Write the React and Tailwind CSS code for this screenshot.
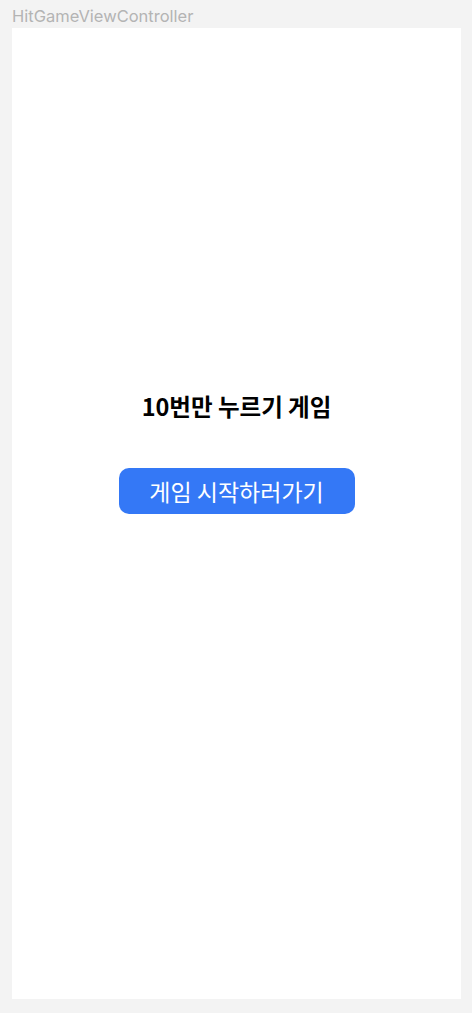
export default function App() {
  return (
    <div className="min-h-screen bg-white">
      <div className="w-[472px] h-[1013px] bg-[#f3f3f3] flex flex-col">
        <div
          className="h-[28px] pl-[12px] pt-[6px] text-[16.5px] leading-[20px] text-[#b4b4b4]"
          style={{ fontFamily: 'Inter, "Noto Sans", sans-serif' }}
        >
          HitGameViewController
        </div>
        <div
          className="mx-[12px] w-[449px] h-[971px] bg-white flex flex-col items-center pt-[364px]"
          style={{ fontFamily: '"Noto Sans CJK KR", sans-serif' }}
        >
          <h1 className="text-[23.5px] leading-[28px] font-bold text-black">10번만 누르기 게임</h1>
          <button className="mt-[48px] w-[236px] h-[46px] rounded-[10px] bg-[#3478f6] text-white text-[23px] leading-[46px]">
            게임 시작하러가기
          </button>
        </div>
      </div>
    </div>
  );
}
